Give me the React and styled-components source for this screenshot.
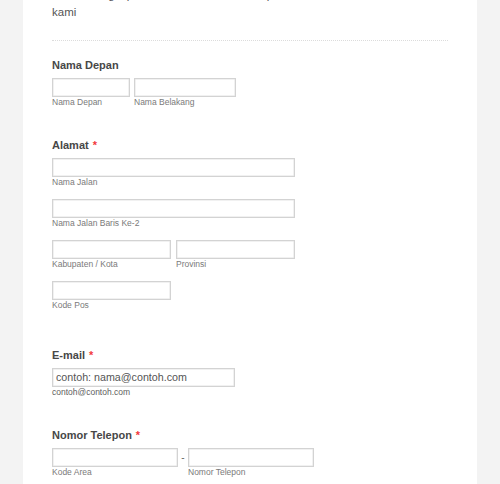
import React from "react";
import styled, { createGlobalStyle } from "styled-components";

const GlobalStyle = createGlobalStyle`
  html, body {
    margin: 0;
    padding: 0;
    background: #f3f3f3;
    font-family: "Liberation Sans", Arial, Helvetica, sans-serif;
    overflow: hidden;
  }
`;

const Page = styled.div`
  height: 484px;
  padding: 0 23px;
  box-sizing: border-box;
`;

const Card = styled.div`
  display: flow-root;
  background: #ffffff;
  height: 100%;
  padding: 0 29px;
  box-sizing: border-box;
`;

const Description = styled.p`
  margin: -13.5px 0 0;
  font-size: 11.5px;
  line-height: 17.5px;
  color: #555;
`;

const Divider = styled.hr`
  margin: 18.5px 0 0;
  border: 0;
  border-top: 1px dotted #dcdcdc;
  height: 0;
`;

const Field = styled.div`
  margin-top: ${(p) => p.$top}px;
`;

const Label = styled.div`
  font-size: 11px;
  line-height: 14px;
  font-weight: bold;
  color: #474747;
  margin-bottom: 6px;
`;

const Req = styled.span`
  color: #f23a3c;
  margin-left: 4px;
`;

const Rows = styled.div`
  display: flex;
  flex-direction: column;
  gap: 11px;
`;

const Row = styled.div`
  display: flex;
  align-items: flex-start;
  gap: ${(p) => p.$gap ?? 4}px;
`;

const Sub = styled.div`
  display: flex;
  flex-direction: column;
  width: ${(p) => p.$w}px;
  flex-shrink: 0;
`;

const Input = styled.div`
  height: 19px;
  box-sizing: border-box;
  border: 1px solid #d3d3d3;
  box-shadow: inset 0 0 0 0.5px #e4e4e4;
  background: #fff;
  font-size: 10.7px;
  line-height: 17px;
  color: #555;
  padding-left: 3px;
  white-space: nowrap;
`;

const SubLabel = styled.div`
  font-size: 8.5px;
  line-height: 11px;
  color: ${(p) => (p.$dark ? "#5e5e5e" : "#7a7a7a")};
  white-space: nowrap;
`;

const Dash = styled.div`
  font-size: 10px;
  line-height: 19px;
  color: #666;
  width: 10px;
  flex-shrink: 0;
  text-align: center;
`;

const Box = ({ w, label, placeholder, dark }) => (
  <Sub $w={w}>
    <Input>{placeholder}</Input>
    <SubLabel $dark={dark}>{label}</SubLabel>
  </Sub>
);

export default function App() {
  return (
    <>
      <GlobalStyle />
      <Page>
        <Card>
          <Description>
            Silakan lengkapi formulir di bawah ini dan pesan Anda akan diteruskan ke tim
            kami
          </Description>
          <Divider />

          <Field $top={17}>
            <Label>Nama Depan</Label>
            <Row>
              <Box w={78} label="Nama Depan" />
              <Box w={102} label="Nama Belakang" />
            </Row>
          </Field>

          <Field $top={30}>
            <Label>
              Alamat<Req>*</Req>
            </Label>
            <Rows>
              <Row>
                <Box w={243} label="Nama Jalan" />
              </Row>
              <Row>
                <Box w={243} label="Nama Jalan Baris Ke-2" />
              </Row>
              <Row $gap={5}>
                <Box w={119} label="Kabupaten / Kota" />
                <Box w={119} label="Provinsi" />
              </Row>
              <Row>
                <Box w={119} label="Kode Pos" />
              </Row>
            </Rows>
          </Field>

          <Field $top={37}>
            <Label>
              E-mail<Req>*</Req>
            </Label>
            <Row>
              <Box w={183} label="contoh@contoh.com" placeholder="contoh: nama@contoh.com" dark />
            </Row>
          </Field>

          <Field $top={30}>
            <Label>
              Nomor Telepon<Req>*</Req>
            </Label>
            <Row $gap={0}>
              <Box w={126} label="Kode Area" />
              <Dash>-</Dash>
              <Box w={126} label="Nomor Telepon" />
            </Row>
          </Field>
        </Card>
      </Page>
    </>
  );
}
